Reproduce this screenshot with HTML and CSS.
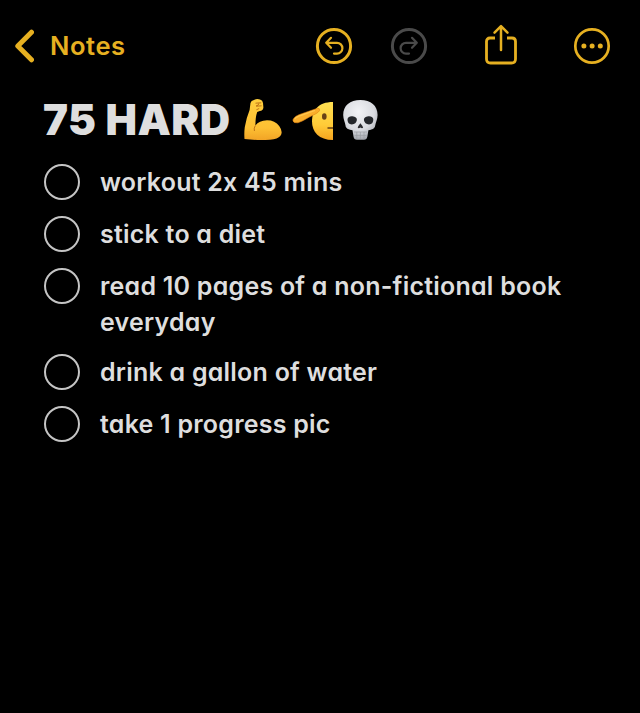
FILE: index.html
```html
<!DOCTYPE html>
<html lang="en">
<head>
    <meta charset="UTF-8">
    <meta name="viewport" content="width=device-width, initial-scale=1.0">
    <title>75 HARD - Notes</title>
    <link rel="stylesheet" href="styles.css">
</head>
<body>

    <header class="toolbar">
        <a class="back" href="#">
            <svg class="chevron" width="20" height="34" viewBox="0 0 20 34">
                <path d="M17.5 3.2 L3.8 17 L17.5 30.8"/>
            </svg>
            <span class="back-label">Notes</span>
        </a>

        <div class="actions">
            <button class="action" aria-label="Undo">
                <svg width="38" height="40" viewBox="0 0 38 40">
                    <circle cx="19" cy="20" r="16.6" stroke-width="3"/>
                    <path d="M16 11.8 L11.2 16.8 L16 21.8 M11.5 16.8 H22 A5.2 5.2 0 0 1 22 27.6 H19" stroke-width="2.2"/>
                </svg>
            </button>
            <button class="action redo" aria-label="Redo">
                <svg width="38" height="40" viewBox="0 0 38 40">
                    <circle cx="19" cy="20" r="16.6" stroke-width="3"/>
                    <path d="M22 11.8 L26.8 16.8 L22 21.8 M26.5 16.8 H16 A5.2 5.2 0 0 0 16 27.6 H19" stroke-width="2.2"/>
                </svg>
            </button>
            <button class="action share" aria-label="Share">
                <svg width="34" height="42" viewBox="0 0 34 42">
                    <path d="M11 14 H6 Q2.5 14 2.5 17.5 V35 Q2.5 39 6.5 39 H27.5 Q31.5 39 31.5 35 V17.5 Q31.5 14 28 14 H23" stroke-width="2.8" stroke-linecap="butt"/>
                    <path d="M17 26 V2.4 M10.5 8.7 L17 2.2 L23.5 8.7" stroke-width="2.5"/>
                </svg>
            </button>
            <button class="action more" aria-label="More">
                <svg width="38" height="40" viewBox="0 0 38 40">
                    <circle cx="19" cy="20" r="16.7" stroke-width="2.7"/>
                    <g class="dots">
                        <circle cx="10.9" cy="20" r="2.5"/>
                        <circle cx="19.1" cy="20" r="2.5"/>
                        <circle cx="27.3" cy="20" r="2.5"/>
                    </g>
                </svg>
            </button>
        </div>
    </header>

    <main class="note">
        <div class="title">
            <h1>75 HARD</h1>
            <svg class="emoji" width="136" height="44" viewBox="0 0 136 44" role="img" aria-label="Flexed arm, saluting face, skull">
                <defs>
                    <linearGradient id="arm" x1="0" y1="0" x2="0" y2="1">
                        <stop offset="0" stop-color="#ffcf3d"/>
                        <stop offset="0.7" stop-color="#fdc033"/>
                        <stop offset="1" stop-color="#f2a426"/>
                    </linearGradient>
                    <linearGradient id="face" x1="0" y1="0" x2="0" y2="1">
                        <stop offset="0" stop-color="#ffe052"/>
                        <stop offset="0.6" stop-color="#ffcb38"/>
                        <stop offset="1" stop-color="#f5a31e"/>
                    </linearGradient>
                    <radialGradient id="bone" cx="0.45" cy="0.3" r="0.7">
                        <stop offset="0" stop-color="#f2f3f6"/>
                        <stop offset="0.65" stop-color="#d9dbe0"/>
                        <stop offset="1" stop-color="#a3a6ad"/>
                    </radialGradient>
                </defs>

                <!-- flexed arm -->
                <path d="M8.5 5 Q9 2.5 12 2 Q15 0.3 18 1.5 Q20.8 2.4 21 5 L21.4 9.5 Q21 12.8 17.8 13 L15.2 14 Q13.4 19 13.4 27.5 Q17 22.5 25 22.3 Q33 22.3 37.2 28 Q41.5 34 38.3 38 Q36 41 28 41.7 Q15 42.5 2.5 41 Q2 35 2.8 29 Q4.3 20 7.6 12 Z" fill="url(#arm)"/>
                <path d="M13.5 5.2 L19.2 4.8 M14 8 Q17 7.4 16.8 5.4 M14.2 8.2 L19.6 7.8 M14.4 11.8 L17.2 10.5 M13.4 27.5 Q11.6 30 12.4 33" fill="none" stroke="#b76a13" stroke-width="0.9"/>

                <!-- saluting face, cut off at its middle -->
                <path d="M91 4 C76 4 70 12.5 70 23.5 C70 34 77 42 91 42 Z" fill="url(#face)"/>
                <ellipse cx="82.3" cy="18.5" rx="2.3" ry="3.3" fill="#684316"/>
                <path d="M85.5 30 H91" stroke="#6b4516" stroke-width="1.6"/>
                <path d="M51.7 20.5 Q53 18.2 57 16.7 L69 12.5 L75.5 10.3 Q78 10 77.5 12.7 Q76 14.7 73.8 15.8 L67 19.2 Q61 23 56 24.8 Q51.5 25.2 51 23 Q50.8 21.4 51.7 20.5 Z" fill="#faae2b" stroke="#dd7f13" stroke-width="0.6"/>
                <path d="M52.8 20.8 Q54.5 18.7 60 17 L73 12.3" fill="none" stroke="#ffc54c" stroke-width="1.4"/>

                <!-- skull -->
                <path d="M118.4 2 C108 2 101.2 7.5 101.2 17 C101.2 21.5 103.2 24.5 103.5 27.5 C103.8 31 107 31.5 110.5 32.3 L111.5 38.5 Q112 41.8 115 41.8 H122 Q124.8 41.8 125.4 38.5 L126.4 32.3 C130 31.5 132.8 31 133.2 27.5 C133.6 24.5 135.6 21.5 135.6 17 C135.6 7.5 128.8 2 118.4 2 Z" fill="url(#bone)"/>
                <path d="M105.5 21 Q106.5 17.9 110.5 18.3 Q115 18.8 114.9 22 Q114.2 26.2 109.8 26.5 Q105.2 26.2 105.5 21 Z M131.3 21 Q130.3 17.9 126.3 18.3 Q121.8 18.8 121.9 22 Q122.6 26.2 127 26.5 Q131.6 26.2 131.3 21 Z" fill="#24272b"/>
                <path d="M118.4 25.2 Q116.3 27.5 115.7 29.8 Q116.8 30.9 118.4 29.5 Q120 30.9 121.1 29.8 Q120.5 27.5 118.4 25.2 Z" fill="#2b2c30"/>
                <path d="M112 34 H125 M112.5 37.4 H124.5 M114.8 34 V41 M118.4 34 V41 M122 34 V41" fill="none" stroke="#9b9da3" stroke-width="0.7"/>
            </svg>
        </div>

        <ul class="checklist">
            <li><span class="check"></span><span class="text">workout 2x 45 mins</span></li>
            <li><span class="check"></span><span class="text">stick to a diet</span></li>
            <li><span class="check"></span><span class="text">read 10 pages of a non-fictional book everyday</span></li>
            <li><span class="check"></span><span class="text">drink a gallon of water</span></li>
            <li><span class="check"></span><span class="text">take 1 progress pic</span></li>
        </ul>
    </main>

</body>
</html>
```
FILE: styles.css
```css
* {
    box-sizing: border-box;
}
body {
    margin: 0;
    min-height: 713px;
    background-color: #000;
    color: #dedede;
    font-family: Inter, "Liberation Sans", sans-serif;
}
.toolbar {
    display: flex;
    justify-content: space-between;
    align-items: center;
    height: 92px;
    padding: 0 29px 0 14px;
    color: #e6b021;
}
.toolbar svg {
    display: block;
    fill: none;
    stroke: currentColor;
    stroke-linecap: round;
    stroke-linejoin: round;
}
.back {
    display: flex;
    align-items: center;
    gap: 16px;
    color: inherit;
    text-decoration: none;
}
.back .chevron {
    stroke-width: 5;
}
.back-label {
    margin-top: -1px;
    font-size: 25.5px;
    font-weight: 600;
    letter-spacing: 0.6px;
}
.actions {
    display: flex;
    align-items: center;
}
.action {
    padding: 0;
    border: none;
    background: none;
    color: inherit;
    cursor: pointer;
}
.redo {
    margin-left: 37px;
    color: #4a4a4a;
}
.share {
    margin: -3px 0 0 56px;
}
.more {
    margin-left: 55px;
}
.more .dots {
    fill: currentColor;
    stroke: none;
}
.note {
    padding: 4px 44px 0;
}
.title {
    display: flex;
    align-items: center;
    height: 48px;
}
.title h1 {
    width: 199px;
    margin: 0 0 0 -1px;
    font-size: 42px;
    font-weight: 900;
    line-height: 48px;
    letter-spacing: 0.5px;
    white-space: nowrap;
}
.checklist {
    display: flex;
    flex-direction: column;
    gap: 14px;
    margin: 19.6px 0 0;
    padding: 0;
    list-style: none;
}
.checklist li {
    display: flex;
    gap: 20px;
    min-height: 38px;
}
.check {
    flex: none;
    width: 36px;
    height: 36px;
    border: 2px solid #c4c4c4;
    border-radius: 50%;
}
.text {
    font-size: 25px;
    font-weight: 600;
    line-height: 36px;
    letter-spacing: 0.23px;
    font-feature-settings: "cv11";
}
```
